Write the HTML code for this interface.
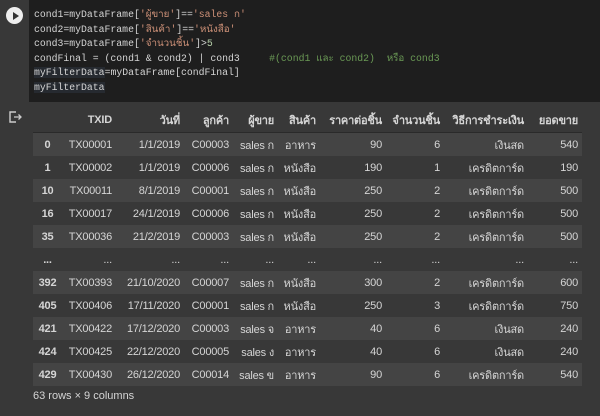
<!DOCTYPE html>
<html><head><meta charset="utf-8"><style>
body{margin:0;width:600px;height:416px;background:#383838;overflow:hidden;font-family:"Liberation Sans","Noto Sans CJK SC",sans-serif;position:relative}
.code{position:absolute;left:29px;top:0;width:571px;height:102px;background:#1e1e1e}
.code pre{margin:0;position:absolute;left:5px;top:8px;font-family:"Liberation Mono","DejaVu Sans Mono",monospace;font-size:9.8px;line-height:14.6px;color:#d4d4d4}
.s{color:#ce9178}.n{color:#b5cea8}.c{color:#6a9955}
.hl{background:#262a30}
.run{position:absolute;left:6px;top:7px;width:17px;height:17px;border-radius:50%;background:#eee}
.run:after{content:"";position:absolute;left:6.5px;top:4.5px;border-left:6px solid #333;border-top:4px solid transparent;border-bottom:4px solid transparent}
table{position:absolute;left:33px;top:108px;border-collapse:collapse;table-layout:fixed;font-size:11px;letter-spacing:-0.2px;color:#d5d5d5;width:549px}
td,th{text-align:right;padding:0 4px 0 0;height:23px;white-space:nowrap;overflow:visible}
th{font-weight:bold;height:24px;border-bottom:1px solid #2a2a2a}
td:first-child{font-weight:bold;text-align:center;padding:0}
.a{background:#444}.b{background:#383838}
.foot{position:absolute;left:33px;top:390px;font-size:11px;color:#d5d5d5}
</style></head><body>
<div class="run"></div>
<div class="code"><pre>cond1=myDataFrame[<span class="s">'ผู้ขาย'</span>]==<span class="s">'sales ก'</span>
cond2=myDataFrame[<span class="s">'สินค้า'</span>]==<span class="s">'หนังสือ'</span>
cond3=myDataFrame[<span class="s">'จำนวนชิ้น'</span>]&gt;<span class="n">5</span>
condFinal = (cond1 &amp; cond2) | cond3     <span class="c">#(cond1 และ cond2)  หรือ cond3</span>
<span class="hl">myFilterData</span>=myDataFrame[condFinal]
<span class="hl">myFilterData</span></pre></div>
<svg style="position:absolute;left:9px;top:111px" width="13" height="12" viewBox="0 0 13 12"><path d="M7 1H1v10h6" fill="none" stroke="#ccc" stroke-width="1.4"/><path d="M5 6h7M9.5 3.5L12 6 9.5 8.5" fill="none" stroke="#ccc" stroke-width="1.3"/></svg>
<table>
<colgroup><col style="width:29px"><col style="width:54px"><col style="width:68px"><col style="width:49px"><col style="width:45px"><col style="width:42px"><col style="width:66px"><col style="width:58px"><col style="width:84px"><col style="width:54px"></colgroup>
<thead><tr><th></th><th>TXID</th><th>วันที่</th><th>ลูกค้า</th><th>ผู้ขาย</th><th>สินค้า</th><th>ราคาต่อชิ้น</th><th>จำนวนชิ้น</th><th>วิธีการชำระเงิน</th><th>ยอดขาย</th></tr></thead>
<tbody>
<tr class="a"><td>0</td><td>TX00001</td><td>1/1/2019</td><td>C00003</td><td>sales ก</td><td>อาหาร</td><td>90</td><td>6</td><td>เงินสด</td><td>540</td></tr>
<tr class="b"><td>1</td><td>TX00002</td><td>1/1/2019</td><td>C00006</td><td>sales ก</td><td>หนังสือ</td><td>190</td><td>1</td><td>เครดิตการ์ด</td><td>190</td></tr>
<tr class="a"><td>10</td><td>TX00011</td><td>8/1/2019</td><td>C00001</td><td>sales ก</td><td>หนังสือ</td><td>250</td><td>2</td><td>เครดิตการ์ด</td><td>500</td></tr>
<tr class="b"><td>16</td><td>TX00017</td><td>24/1/2019</td><td>C00006</td><td>sales ก</td><td>หนังสือ</td><td>250</td><td>2</td><td>เครดิตการ์ด</td><td>500</td></tr>
<tr class="a"><td>35</td><td>TX00036</td><td>21/2/2019</td><td>C00003</td><td>sales ก</td><td>หนังสือ</td><td>250</td><td>2</td><td>เครดิตการ์ด</td><td>500</td></tr>
<tr class="b"><td>...</td><td>...</td><td>...</td><td>...</td><td>...</td><td>...</td><td>...</td><td>...</td><td>...</td><td>...</td></tr>
<tr class="a"><td>392</td><td>TX00393</td><td>21/10/2020</td><td>C00007</td><td>sales ก</td><td>หนังสือ</td><td>300</td><td>2</td><td>เครดิตการ์ด</td><td>600</td></tr>
<tr class="b"><td>405</td><td>TX00406</td><td>17/11/2020</td><td>C00001</td><td>sales ก</td><td>หนังสือ</td><td>250</td><td>3</td><td>เครดิตการ์ด</td><td>750</td></tr>
<tr class="a"><td>421</td><td>TX00422</td><td>17/12/2020</td><td>C00003</td><td>sales จ</td><td>อาหาร</td><td>40</td><td>6</td><td>เงินสด</td><td>240</td></tr>
<tr class="b"><td>424</td><td>TX00425</td><td>22/12/2020</td><td>C00005</td><td>sales ง</td><td>อาหาร</td><td>40</td><td>6</td><td>เงินสด</td><td>240</td></tr>
<tr class="a"><td>429</td><td>TX00430</td><td>26/12/2020</td><td>C00014</td><td>sales ข</td><td>อาหาร</td><td>90</td><td>6</td><td>เครดิตการ์ด</td><td>540</td></tr>
</tbody></table>
<div class="foot">63 rows × 9 columns</div>
</body></html>
